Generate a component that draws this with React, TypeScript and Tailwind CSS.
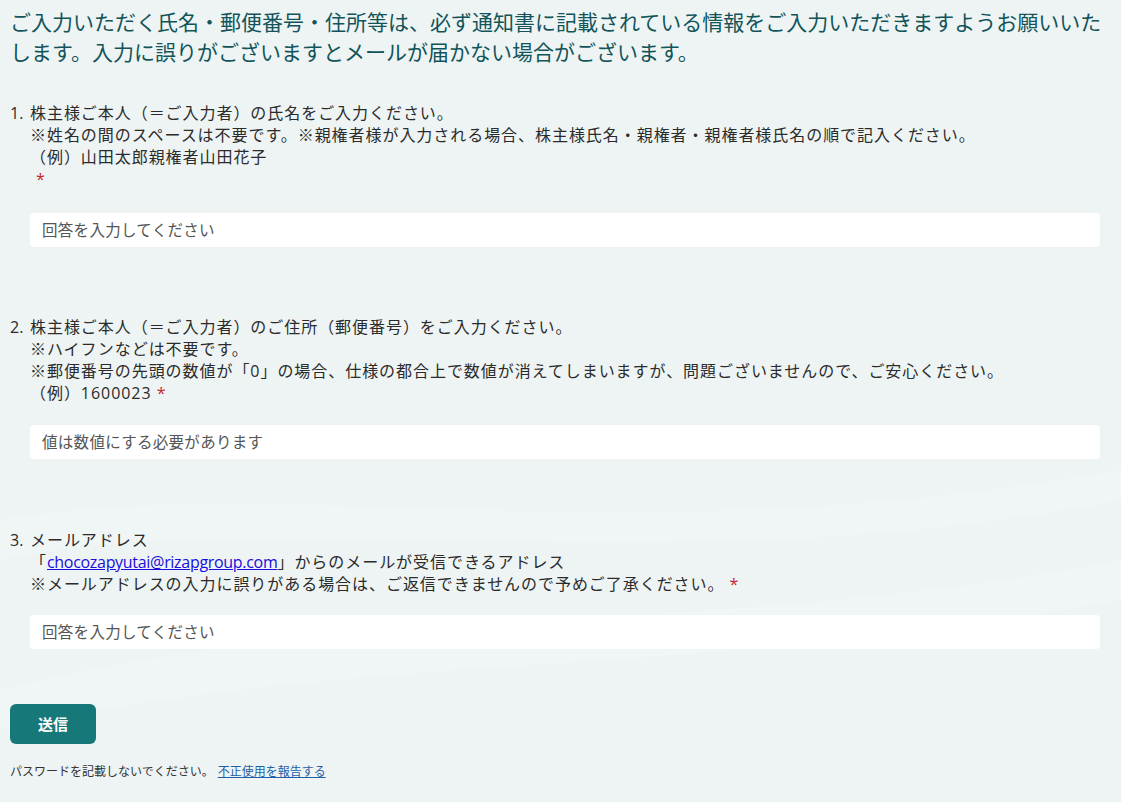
import type { ReactNode } from "react";

const font = "font-['Open_Sans','Noto_Sans_CJK_JP',sans-serif]";

function Required({ className = "" }: { className?: string }) {
  return <span className={`text-[#c4262e] ${className}`}>*</span>;
}

function Question({
  num,
  lines,
  placeholder,
  gap,
  className = "",
}: {
  num: number;
  lines: ReactNode[];
  placeholder: string;
  gap: string;
  className?: string;
}) {
  return (
    <div className={className}>
      <div className="flex text-[16px] leading-[22px] text-[#2b2b2b]">
        <span className="w-[20px] shrink-0">{num}.</span>
        <div className="flex flex-col tracking-[0.95px]">
          {lines.map((line, i) => (
            <div key={i}>{line}</div>
          ))}
        </div>
      </div>
      <input
        type="text"
        placeholder={placeholder}
        className={`${gap} ml-[20px] block h-[34px] w-[1070px] rounded-[4px] bg-white px-[12px] text-[15.5px] tracking-[0.3px] text-[#333] outline-none placeholder:text-[#555]`}
      />
    </div>
  );
}

export default function App() {
  return (
    <div className={`relative min-h-screen overflow-hidden bg-[#eef4f4] ${font}`}>
      {/* faint background waves */}
      <svg className="pointer-events-none absolute inset-0 h-full w-full" viewBox="0 0 1121 802" preserveAspectRatio="none">
        <path d="M0 520 C 300 470, 600 560, 1121 470 L1121 500 C 650 590, 300 500, 0 560 Z" fill="#ffffff" opacity="0.15" />
        <path d="M0 690 C 350 600, 700 640, 1121 560 L1121 600 C 700 680, 350 650, 0 730 Z" fill="#ffffff" opacity="0.12" />
      </svg>

      <div className="relative px-[10px] pt-[7px] pb-[20px]">
        <h1 className="text-[21px] leading-[30px] text-[#12545a]">
          ご入力いただく氏名・郵便番号・住所等は、必ず通知書に記載されている情報をご入力いただきますようお願いいた
          <br />
          します。入力に誤りがございますとメールが届かない場合がございます。
        </h1>

        <Question
          className="mt-[35px]"
          num={1}
          gap="mt-[23px]"
          placeholder="回答を入力してください"
          lines={[
            "株主様ご本人（＝ご入力者）の氏名をご入力ください。",
            "※姓名の間のスペースは不要です。※親権者様が入力される場合、株主様氏名・親権者・親権者様氏名の順で記入ください。",
            "（例）山田太郎親権者山田花子",
            <Required className="ml-[6px]" />,
          ]}
        />

        <Question
          className="mt-[69px]"
          num={2}
          gap="mt-[21px]"
          placeholder="値は数値にする必要があります"
          lines={[
            "株主様ご本人（＝ご入力者）のご住所（郵便番号）をご入力ください。",
            "※ハイフンなどは不要です。",
            "※郵便番号の先頭の数値が「0」の場合、仕様の都合上で数値が消えてしまいますが、問題ございませんので、ご安心ください。",
            <>
              （例）1600023 <Required />
            </>,
          ]}
        />

        <Question
          className="mt-[70px]"
          num={3}
          gap="mt-[20px]"
          placeholder="回答を入力してください"
          lines={[
            "メールアドレス",
            <>
              「
              <a href="#" className="tracking-[-0.3px] text-[#1a0dde] underline">
                chocozapyutai@rizapgroup.com
              </a>
              」からのメールが受信できるアドレス
            </>,
            <>
              ※メールアドレスの入力に誤りがある場合は、ご返信できませんので予めご了承ください。 <Required />
            </>,
          ]}
        />

        <button className="mt-[55px] flex h-[40px] w-[86px] items-center justify-center rounded-[6px] bg-[#17787a] text-[15px] font-bold text-white">
          送信
        </button>

        <p className="mt-[19px] text-[12px] leading-[18px] text-[#333]">
          パスワードを記載しないでください。
          <a href="#" className="ml-[4px] text-[#1f5fa8] underline">
            不正使用を報告する
          </a>
        </p>
      </div>
    </div>
  );
}
